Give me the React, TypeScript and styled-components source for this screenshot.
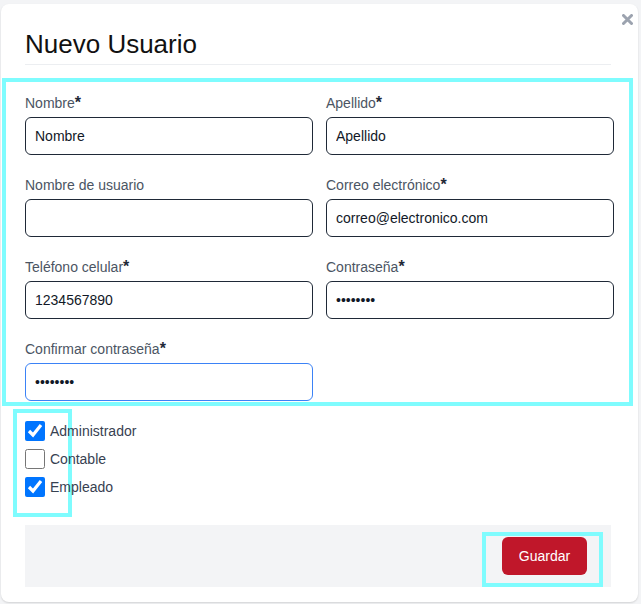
import React from 'react';
import styled, { createGlobalStyle } from 'styled-components';

const GlobalStyle = createGlobalStyle`
  body {
    margin: 0;
    background: #f3f4f6;
    font-family: "Liberation Sans", Arial, sans-serif;
  }
`;

const Page = styled.div`
  padding: 4px 3px 2px 1px;
`;

const Modal = styled.div`
  position: relative;
  width: 637px;
  height: 598px;
  box-sizing: border-box;
  background: #ffffff;
  border-radius: 8px;
  box-shadow: 0 1px 2px rgba(0, 0, 0, 0.14);
`;

const Header = styled.div`
  padding: 25px 27px 0 24px;
`;

const Title = styled.h2`
  margin: 0;
  font-size: 26px;
  line-height: 30px;
  font-weight: 400;
  color: #111111;
`;

const Divider = styled.div`
  margin-top: 5px;
  height: 1px;
  background: #eceef1;
`;

const CloseButton = styled.button`
  position: absolute;
  top: 10px;
  right: 5px;
  width: 11px;
  height: 11px;
  padding: 0;
  border: none;
  background: none;
  display: flex;
  cursor: pointer;
`;

const Highlight = styled.div`
  border: 4px solid #7ffcfe;
  box-sizing: border-box;
`;

const FormSection = styled(Highlight)`
  margin: 13px 0 0 1px;
  width: 631px;
  padding: 11px 15px 1px 19px;
  display: grid;
  grid-template-columns: 1fr 1fr;
  column-gap: 13px;
  row-gap: 20px;
`;

const Field = styled.div`
  display: flex;
  flex-direction: column;
  gap: 4px;
`;

const Label = styled.label`
  font-size: 14px;
  line-height: 20px;
  color: #4b5563;
`;

const Required = styled.span`
  font-size: 16px;
  font-weight: 700;
  color: #1f2937;
`;

const Input = styled.input<{ $focused?: boolean }>`
  height: 38px;
  box-sizing: border-box;
  padding: 0 9px;
  border: 1px solid ${p => (p.$focused ? '#3b82f6' : '#1f2937')};
  border-radius: 6px;
  font-family: "Liberation Sans", Arial, sans-serif;
  font-size: 14px;
  color: #111827;
  background: #ffffff;
  outline: none;
`;

const CheckGroup = styled(Highlight)`
  margin: 3px 0 0 12px;
  width: 59px;
  height: 108px;
  padding: 8px 0 0 8px;
  display: flex;
  flex-direction: column;
  gap: 8px;
`;

const CheckRow = styled.label`
  display: flex;
  align-items: center;
  gap: 5px;
  height: 20px;
  white-space: nowrap;
  font-size: 14px;
  color: #374151;
`;

const CheckBox = styled.input`
  width: 20px;
  height: 20px;
  margin: 0;
  flex-shrink: 0;
`;

const Footer = styled.div`
  margin: 8px 27px 0 24px;
  height: 62px;
  box-sizing: border-box;
  padding: 7px 8px 0 0;
  background: #f3f4f6;
  display: flex;
  justify-content: flex-end;
  align-items: flex-start;
`;

const ButtonFrame = styled(Highlight)`
  padding: 1px 12px 8px 16px;
`;

const SaveButton = styled.button`
  width: 85px;
  height: 38px;
  border: none;
  border-radius: 6px;
  background: #c0172a;
  color: #ffffff;
  font-family: "Liberation Sans", Arial, sans-serif;
  font-size: 14px;
  cursor: pointer;
`;

type FieldDef = {
  label: string;
  required?: boolean;
  value: string;
  type?: string;
  focused?: boolean;
};

const fields: FieldDef[] = [
  { label: 'Nombre', required: true, value: 'Nombre' },
  { label: 'Apellido', required: true, value: 'Apellido' },
  { label: 'Nombre de usuario', value: '' },
  { label: 'Correo electrónico', required: true, value: 'correo@electronico.com' },
  { label: 'Teléfono celular', required: true, value: '1234567890' },
  { label: 'Contraseña', required: true, value: '12345678', type: 'password' },
  { label: 'Confirmar contraseña', required: true, value: '12345678', type: 'password', focused: true },
];

const roles = [
  { name: 'Administrador', checked: true },
  { name: 'Contable', checked: false },
  { name: 'Empleado', checked: true },
];

const App: React.FC = () => {
  return (
    <>
      <GlobalStyle />
      <Page>
        <Modal>
          <CloseButton aria-label="Cerrar">
            <svg width="11" height="11" viewBox="0 0 11 11">
              <path d="M1.5 1.5L9.5 9.5M9.5 1.5L1.5 9.5" stroke="#9ca3af" strokeWidth="3" strokeLinecap="round" />
            </svg>
          </CloseButton>
          <Header>
            <Title>Nuevo Usuario</Title>
            <Divider />
          </Header>

          <FormSection>
            {fields.map(f => (
              <Field key={f.label}>
                <Label>
                  {f.label}
                  {f.required && <Required>*</Required>}
                </Label>
                <Input
                  type={f.type || 'text'}
                  defaultValue={f.value}
                  $focused={f.focused}
                />
              </Field>
            ))}
          </FormSection>

          <CheckGroup>
            {roles.map(r => (
              <CheckRow key={r.name}>
                <CheckBox type="checkbox" defaultChecked={r.checked} />
                {r.name}
              </CheckRow>
            ))}
          </CheckGroup>

          <Footer>
            <ButtonFrame>
              <SaveButton>Guardar</SaveButton>
            </ButtonFrame>
          </Footer>
        </Modal>
      </Page>
    </>
  );
};

export default App;
